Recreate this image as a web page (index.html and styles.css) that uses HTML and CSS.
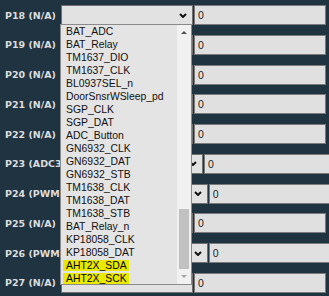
FILE: index.html
```
<!DOCTYPE html>
<html lang="en">
<head>
    <meta charset="UTF-8">
    <meta name="viewport" content="width=device-width, initial-scale=1.0">
    <title>Pin Config</title>
    <link rel="stylesheet" href="styles.css">
</head>
<body>

    <div class="pins">
        <div class="pin-row">
            <label>P18 (N/A)</label>
            <div class="select"><svg width="8" height="5" viewBox="0 0 8 5"><polyline points="1,1 4,4 7,1"/></svg></div>
            <input type="text" value="0">
        </div>
        <div class="pin-row">
            <label>P19 (N/A)</label>
            <div class="select"><svg width="8" height="5" viewBox="0 0 8 5"><polyline points="1,1 4,4 7,1"/></svg></div>
            <input type="text" value="0">
        </div>
        <div class="pin-row">
            <label>P20 (N/A)</label>
            <div class="select"><svg width="8" height="5" viewBox="0 0 8 5"><polyline points="1,1 4,4 7,1"/></svg></div>
            <input type="text" value="0">
        </div>
        <div class="pin-row">
            <label>P21 (N/A)</label>
            <div class="select"><svg width="8" height="5" viewBox="0 0 8 5"><polyline points="1,1 4,4 7,1"/></svg></div>
            <input type="text" value="0">
        </div>
        <div class="pin-row">
            <label>P22 (N/A)</label>
            <div class="select"><svg width="8" height="5" viewBox="0 0 8 5"><polyline points="1,1 4,4 7,1"/></svg></div>
            <input type="text" value="0">
        </div>
        <div class="pin-row">
            <label>P23 (ADC3)</label>
            <div class="select"><svg width="8" height="5" viewBox="0 0 8 5"><polyline points="1,1 4,4 7,1"/></svg></div>
            <input type="text" value="0">
        </div>
        <div class="pin-row">
            <label>P24 (PWM4)</label>
            <div class="select"><svg width="8" height="5" viewBox="0 0 8 5"><polyline points="1,1 4,4 7,1"/></svg></div>
            <input type="text" value="0">
        </div>
        <div class="pin-row">
            <label>P25 (N/A)</label>
            <div class="select"><svg width="8" height="5" viewBox="0 0 8 5"><polyline points="1,1 4,4 7,1"/></svg></div>
            <input type="text" value="0">
        </div>
        <div class="pin-row">
            <label>P26 (PWM5)</label>
            <div class="select"><svg width="8" height="5" viewBox="0 0 8 5"><polyline points="1,1 4,4 7,1"/></svg></div>
            <input type="text" value="0">
        </div>
        <div class="pin-row">
            <label>P27 (N/A)</label>
            <div class="select"><svg width="8" height="5" viewBox="0 0 8 5"><polyline points="1,1 4,4 7,1"/></svg></div>
            <input type="text" value="0">
        </div>
    </div>

    <!-- open dropdown of P18 -->
    <div class="dropdown">
        <ul class="options">
            <li>BAT_ADC</li>
            <li>BAT_Relay</li>
            <li>TM1637_DIO</li>
            <li>TM1637_CLK</li>
            <li>BL0937SEL_n</li>
            <li>DoorSnsrWSleep_pd</li>
            <li>SGP_CLK</li>
            <li>SGP_DAT</li>
            <li>ADC_Button</li>
            <li>GN6932_CLK</li>
            <li>GN6932_DAT</li>
            <li>GN6932_STB</li>
            <li>TM1638_CLK</li>
            <li>TM1638_DAT</li>
            <li>TM1638_STB</li>
            <li>BAT_Relay_n</li>
            <li>KP18058_CLK</li>
            <li>KP18058_DAT</li>
            <li><mark>AHT2X_SDA</mark></li>
            <li><mark>AHT2X_SCK</mark></li>
        </ul>
        <div class="scrollbar">
            <span class="arrow up"></span>
            <span class="thumb"></span>
            <span class="arrow down"></span>
        </div>
    </div>

</body>
</html>
```

FILE: styles.css
```
body {
    margin: 0;
    background-color: #1f3340;
    font-family: "Liberation Sans", Arial, sans-serif;
    overflow: hidden;
}

.pins {
    display: flex;
    flex-direction: column;
    gap: 9.75px;
    padding: 5px 0 0 5px;
    white-space: nowrap;
}

.pin-row {
    display: flex;
    align-items: center;
    height: 20px;
}

.pin-row label {
    font-family: "DejaVu Sans", Verdana, sans-serif;
    font-weight: bold;
    font-size: 9.5px;
    color: #dddddd;
    margin-right: 5px;
    flex-shrink: 0;
}

.select {
    width: 132px;
    height: 20px;
    box-sizing: border-box;
    background-color: #e2e2e2;
    border: 1px solid #6f6f6f;
    display: flex;
    align-items: center;
    justify-content: flex-end;
    padding-right: 5px;
    flex-shrink: 0;
}

.select svg polyline {
    fill: none;
    stroke: #111;
    stroke-width: 2;
}

input[type="text"] {
    width: 132px;
    height: 20px;
    box-sizing: border-box;
    margin: 0 0 0 1px;
    padding: 0 3px;
    background-color: #e0e0e0;
    border: 1px solid #7a7a7a;
    font-family: "Liberation Sans", Arial, sans-serif;
    font-size: 10.5px;
    color: #222;
    flex-shrink: 0;
}

/* Open list of the first select */
.dropdown {
    position: absolute;
    left: 60px;
    top: 24px;
    width: 132px;
    height: 261px;
    box-sizing: border-box;
    border: 1px solid #8a8a8a;
    background-color: #e4e4e4;
    display: flex;
}

.options {
    list-style: none;
    margin: 0;
    padding: 0;
    flex: 1;
    overflow: hidden;
}

.options li {
    height: 13px;
    line-height: 13px;
    font-size: 10.4px;
    padding-left: 5px;
    color: #111;
    white-space: nowrap;
}

.options mark {
    background-color: #e8e800;
    color: #000;
    padding: 0 2px 0 3px;
    margin-left: -3px;
}

.scrollbar {
    width: 14px;
    background-color: #f1f1f1;
    display: flex;
    flex-direction: column;
    align-items: center;
}

.arrow {
    width: 0;
    height: 0;
    border-left: 3px solid transparent;
    border-right: 3px solid transparent;
    margin: 6px 0;
}

.arrow.up {
    border-bottom: 3px solid #505050;
}

.arrow.down {
    border-top: 3px solid #a3a3a3;
}

.thumb {
    margin-top: auto;
    width: 10px;
    height: 60px;
    background-color: #c1c1c1;
}
```
